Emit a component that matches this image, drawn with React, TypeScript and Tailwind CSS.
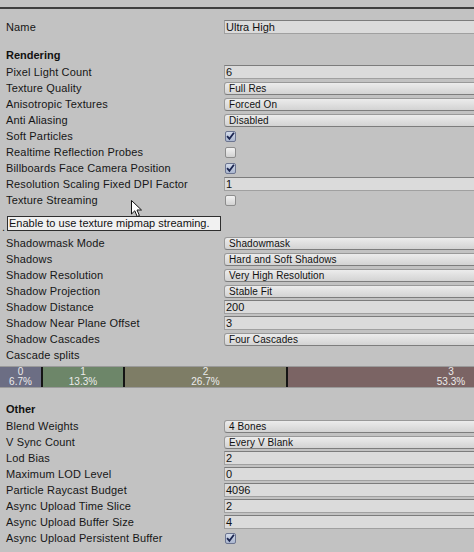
import React from "react";

type Row =
  | { kind: "text"; label: string; value: string }
  | { kind: "popup"; label: string; value: string }
  | { kind: "check"; label: string; checked: boolean }
  | { kind: "label"; label: string };

const rendering: Row[] = [
  { kind: "text", label: "Pixel Light Count", value: "6" },
  { kind: "popup", label: "Texture Quality", value: "Full Res" },
  { kind: "popup", label: "Anisotropic Textures", value: "Forced On" },
  { kind: "popup", label: "Anti Aliasing", value: "Disabled" },
  { kind: "check", label: "Soft Particles", checked: true },
  { kind: "check", label: "Realtime Reflection Probes", checked: false },
  { kind: "check", label: "Billboards Face Camera Position", checked: true },
  { kind: "text", label: "Resolution Scaling Fixed DPI Factor", value: "1" },
  { kind: "check", label: "Texture Streaming", checked: false },
];

const shadows: Row[] = [
  { kind: "popup", label: "Shadowmask Mode", value: "Shadowmask" },
  { kind: "popup", label: "Shadows", value: "Hard and Soft Shadows" },
  { kind: "popup", label: "Shadow Resolution", value: "Very High Resolution" },
  { kind: "popup", label: "Shadow Projection", value: "Stable Fit" },
  { kind: "text", label: "Shadow Distance", value: "200" },
  { kind: "text", label: "Shadow Near Plane Offset", value: "3" },
  { kind: "popup", label: "Shadow Cascades", value: "Four Cascades" },
  { kind: "label", label: "Cascade splits" },
];

const other: Row[] = [
  { kind: "popup", label: "Blend Weights", value: "4 Bones" },
  { kind: "popup", label: "V Sync Count", value: "Every V Blank" },
  { kind: "text", label: "Lod Bias", value: "2" },
  { kind: "text", label: "Maximum LOD Level", value: "0" },
  { kind: "text", label: "Particle Raycast Budget", value: "4096" },
  { kind: "text", label: "Async Upload Time Slice", value: "2" },
  { kind: "text", label: "Async Upload Buffer Size", value: "4" },
  { kind: "check", label: "Async Upload Persistent Buffer", checked: true },
];

const cascades = [
  { name: "0", pct: "6.7%", w: 41, bg: "bg-[#6c6e84]" },
  { name: "1", pct: "13.3%", w: 80, bg: "bg-[#6d8669]" },
  { name: "2", pct: "26.7%", w: 161, bg: "bg-[#7e7d66]" },
  { name: "3", pct: "53.3%", w: 326, bg: "bg-[#7b6464]" },
];

function Checkbox({ checked }: { checked: boolean }) {
  if (checked) {
    return (
      <div className="w-[11px] h-[11px] rounded-[2px] border border-[#6c7590] bg-gradient-to-b from-[#d3dbea] to-[#aab6cf] flex items-center justify-center">
        <svg width="10" height="10" viewBox="0 0 10 10">
          <path d="M1.2 5.2 L3.8 8.2 L8.8 1.4" fill="none" stroke="#1b2550" strokeWidth="2" />
        </svg>
      </div>
    );
  }
  return (
    <div className="w-[11px] h-[11px] rounded-[2px] border border-[#8d8d8d] bg-gradient-to-b from-[#f2f2f2] to-[#d2d2d2]" />
  );
}

function Field({ row }: { row: Row }) {
  if (row.kind === "text") {
    return (
      <div className="flex-1 h-[14px] -mr-2 bg-[#dbdbdb] border border-[#a0a0a0] border-t-[#7c7c7c] flex items-center pl-[1px] text-[11px] text-[#111]">
        {row.value}
      </div>
    );
  }
  if (row.kind === "popup") {
    return (
      <div className="flex-1 h-[13px] -mr-2 rounded-[3px] border border-[#999] border-b-[#7d7d7d] bg-gradient-to-b from-[#ececec] to-[#d3d3d3] flex items-center pl-[4px] text-[10px] tracking-[0.1px] text-[#111]">
        {row.value}
      </div>
    );
  }
  if (row.kind === "check") {
    return (
      <div className="pl-[1px]">
        <Checkbox checked={row.checked} />
      </div>
    );
  }
  return null;
}

function Rows({ rows }: { rows: Row[] }) {
  return (
    <>
      {rows.map((r) => (
        <div key={r.label} className="h-[16px] flex items-center pl-[6px]">
          <div className="w-[218px] shrink-0 text-[11px] tracking-[0.15px] text-[#161616]">{r.label}</div>
          <Field row={r} />
        </div>
      ))}
    </>
  );
}

export default function App() {
  return (
    <div
      className="relative w-[474px] h-[552px] overflow-hidden bg-[#c2c2c2]"
      style={{ fontFamily: '"Liberation Sans", Arial, sans-serif' }}
    >
      <div className="mt-[7px] h-[2px] bg-[#3e3e3e]" />

      <div className="mt-[10px]">
        <Rows rows={[{ kind: "text", label: "Name", value: "Ultra High" }]} />
      </div>

      <div className="mt-[11px] h-[18px] flex items-center pl-[6px] text-[11px] font-bold text-[#111]">
        Rendering
      </div>
      <Rows rows={rendering} />

      <div className="relative h-[27px]">
        <div className="absolute left-[2px] top-[11px] text-[11px] text-[#161616]">.</div>
      </div>

      <Rows rows={shadows} />

      <div className="mt-[3px] h-[22px] flex border-y border-[#9a9a9a] w-[620px]">
        {cascades.map((c, i) => (
          <div key={c.name} className="flex h-full">
            <div
              className={`${c.bg} h-full flex flex-col items-center justify-center leading-[10px] text-[10px] text-[#ececec]`}
              style={{ width: c.w }}
            >
              <span>{c.name}</span>
              <span>{c.pct}</span>
            </div>
            {i < cascades.length - 1 && <div className="w-[2px] h-full bg-[#141414]" />}
          </div>
        ))}
      </div>

      <div className="mt-[12px] h-[18px] flex items-center pl-[6px] text-[11px] font-bold text-[#111]">
        Other
      </div>
      <Rows rows={other} />

      {/* tooltip */}
      <div className="absolute left-[7px] top-[216px] w-[214px] h-[15px] border border-[#2e2e2e] bg-[#f1f1f1] flex items-center pl-[1px] text-[11px] text-[#111] whitespace-nowrap">
        Enable to use texture mipmap streaming.
      </div>

      {/* mouse cursor */}
      <svg className="absolute left-[131px] top-[200px]" width="13" height="18" viewBox="0 0 13 18">
        <path
          d="M0.5 0.5 L0.5 14 L3.8 10.8 L6.2 16.5 L8.4 15.5 L6 10 L10.5 10 Z"
          fill="#fff"
          stroke="#111"
          strokeWidth="1"
          strokeLinejoin="round"
        />
      </svg>
    </div>
  );
}
